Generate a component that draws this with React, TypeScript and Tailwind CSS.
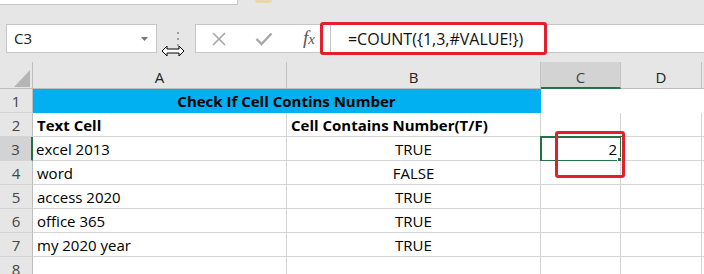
import React from "react";

const font = { fontFamily: "'Open Sans', Lato, sans-serif" };

function XIcon() {
  return (
    <svg width="16" height="16" viewBox="0 0 16 16" className="block">
      <path d="M2 2 L14 14 M14 2 L2 14" stroke="#a6a6a6" strokeWidth="1.6" fill="none" />
    </svg>
  );
}
function CheckIcon() {
  return (
    <svg width="18" height="14" viewBox="0 0 18 14" className="block">
      <path d="M1.5 7 L6.5 12 L16.5 1.5" stroke="#a6a6a6" strokeWidth="2.4" fill="none" />
    </svg>
  );
}
function Cursor() {
  return (
    <svg width="24" height="12" viewBox="0 0 24 12" className="block">
      <path
        d="M1 6 L6 1 L6 4 L18 4 L18 1 L23 6 L18 11 L18 8 L6 8 L6 11 Z"
        fill="#fff"
        stroke="#000"
        strokeWidth="1"
        strokeLinejoin="miter"
      />
    </svg>
  );
}

const cols = [254, 254, 80, 81, 40];

type CellProps = {
  w: number;
  children?: React.ReactNode;
  className?: string;
  noBorder?: boolean;
};

function Cell({ w, children, className = "", noBorder }: CellProps) {
  return (
    <div
      style={{ width: w }}
      className={`relative shrink-0 h-[24px] ${noBorder ? "" : "border-r border-b border-[#d4d4d4]"} leading-[25px] text-[15px] text-black whitespace-nowrap ${className}`}
    >
      {children}
    </div>
  );
}

function RowHead({ n, selected }: { n: number; selected?: boolean }) {
  return (
    <div
      className={`shrink-0 w-[33px] h-[24px] border-b border-[#d4d4d4] text-center leading-[25px] text-[15px] text-[#444] ${
        selected ? "bg-[#d3d3d3] border-r-2 border-r-[#217346]" : "bg-[#e6e6e6] border-r border-r-[#bdbdbd]"
      }`}
    >
      {n}
    </div>
  );
}

const data: [string, string][] = [
  ["excel 2013", "TRUE"],
  ["word", "FALSE"],
  ["access 2020", "TRUE"],
  ["office 365", "TRUE"],
  ["my 2020 year", "TRUE"],
];

export default function App() {
  return (
    <div style={font} className="w-[704px] h-[274px] overflow-hidden bg-[#e6e6e6] relative">
      {/* top strip */}
      <div className="flex h-[24px] items-start">
        <div className="w-[238px] h-[5px] bg-white border-b border-r border-[#c6c6c6]" />
        <div className="ml-[17px] w-[17px] h-[3px] bg-[#e9d9a6] rounded-b-sm" />
      </div>
      {/* formula bar */}
      <div className="flex h-[29px] items-stretch">
        <div className="ml-[6px] w-[151px] bg-white border border-[#c6c6c6] flex items-center justify-between pl-[7px] pr-[8px]">
          <span className="text-[15px] text-[#222]">C3</span>
          <svg width="7" height="4" viewBox="0 0 7 4" className="block">
            <path d="M0 0 L7 0 L3.5 4 Z" fill="#777" />
          </svg>
        </div>
        <div className="w-[38px] relative">
          <svg width="4" height="20" viewBox="0 0 4 20" className="absolute left-[19px] top-[8px]">
            <rect x="1" y="0" width="2" height="2" fill="#a0a0a0" />
            <rect x="1" y="6" width="2" height="2" fill="#a0a0a0" />
            <rect x="1" y="12" width="2" height="2" fill="#a0a0a0" />
            <rect x="1" y="18" width="2" height="2" fill="#a0a0a0" />
          </svg>
          <div className="absolute left-[4px] top-[21px]">
            <Cursor />
          </div>
        </div>
        <div className="flex-1 bg-white border border-r-0 border-[#c6c6c6] flex items-center">
          <div className="ml-[15px]">
            <XIcon />
          </div>
          <div className="ml-[28px]">
            <CheckIcon />
          </div>
          <div
            className="ml-[30px] text-[19px] text-[#555] italic leading-none -mt-[3px]"
            style={{ fontFamily: "'Liberation Serif', serif" }}
          >
            <span>f</span>
            <span className="text-[15px]">x</span>
          </div>
          <div className="ml-[15px] w-px self-stretch bg-[#c6c6c6]" />
          <div className="ml-[17px] text-[16px] text-[#111] pt-[1px]">=COUNT({"{"}1,3,#VALUE!{"}"})</div>
        </div>
      </div>
      {/* red box formula */}
      <div className="absolute left-[320px] top-[22px] w-[227px] h-[33px] border-[3px] border-[#e31f2c] rounded-[3px]" />

      {/* sheet */}
      <div className="mt-[9px]">
        {/* column headers */}
        <div className="flex h-[27px]">
          <div className="shrink-0 w-[33px] h-[27px] border-r border-b border-[#bdbdbd] relative">
            <svg width="16" height="17" viewBox="0 0 16 17" className="absolute left-[14px] top-[8px]">
              <path d="M16 0 L16 17 L0 17 Z" fill="#b5b5b5" />
            </svg>
          </div>
          {["A", "B", "C", "D", ""].map((c, i) => (
            <div
              key={i}
              style={{ width: cols[i] }}
              className={`shrink-0 h-[27px] border-r border-[#c3c3c3] text-center text-[15px] leading-[30px] ${
                c === "C" ? "bg-[#d3d3d3] border-b-2 border-b-[#217346] text-[#444]" : "border-b border-b-[#bdbdbd] text-[#222]"
              }`}
            >
              {c}
            </div>
          ))}
        </div>
        {/* row 1 */}
        <div className="flex">
          <RowHead n={1} />
          <Cell w={508} className="bg-[#00b0f0] font-bold text-center border-r-[#00b0f0] border-b-[#00b0f0]">
            Check If Cell Contins Number
          </Cell>
          <Cell w={80} noBorder className="bg-white" />
          <Cell w={81} noBorder className="bg-white" />
          <Cell w={40} noBorder className="bg-white" />
        </div>
        {/* row 2 */}
        <div className="flex">
          <RowHead n={2} />
          <Cell w={254} className="bg-white font-bold pl-[4px]">
            Text Cell
          </Cell>
          <Cell w={254} className="bg-white font-bold pl-[4px]">
            Cell Contains Number(T/F)
          </Cell>
          <Cell w={80} className="bg-white" />
          <Cell w={81} className="bg-white" />
          <Cell w={40} className="bg-white" />
        </div>
        {data.map(([a, b], i) => (
          <div className="flex" key={i}>
            <RowHead n={i + 3} selected={i === 0} />
            <Cell w={254} className={`bg-white ${i === 0 ? "pl-[3px]" : "pl-[4px]"}`}>
              {a}
            </Cell>
            <Cell w={254} className="bg-white text-center">
              {b}
            </Cell>
            <Cell w={80} className="bg-white text-right pr-[3px]">
              {i === 0 ? "2" : ""}
              {i === 0 && (
                <>
                  <div className="absolute -left-[1px] -top-[1px] w-[82px] h-[26px] border-2 border-[#217346]" />
                  <div className="absolute -right-[3px] -bottom-[3px] w-[6px] h-[6px] bg-[#217346] border border-white" />
                </>
              )}
            </Cell>
            <Cell w={81} className="bg-white" />
            <Cell w={40} className="bg-white" />
          </div>
        ))}
        <div className="flex">
          <RowHead n={8} />
          <Cell w={254} className="bg-white" />
          <Cell w={254} className="bg-white" />
          <Cell w={80} className="bg-white" />
          <Cell w={81} className="bg-white" />
          <Cell w={40} className="bg-white" />
        </div>
      </div>
      {/* red box C3 */}
      <div className="absolute left-[555px] top-[131px] w-[70px] h-[47px] border-[3px] border-[#e31f2c] rounded-[3px]" />
    </div>
  );
}
